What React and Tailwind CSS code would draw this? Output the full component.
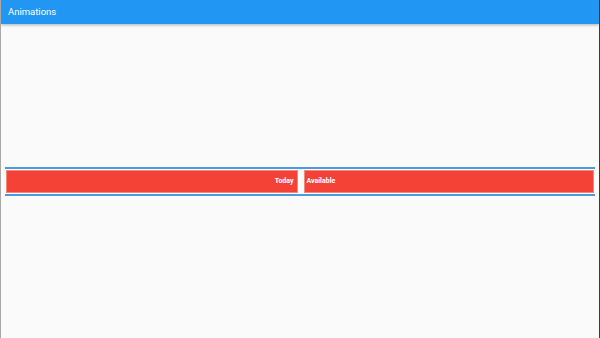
import * as React from "react";

function AppBar() {
	return (
		<header className="h-[24px] bg-[#2196f3] flex items-center px-[7px] shadow-[0_1px_3px_rgba(0,0,0,0.3)] relative z-10">
			<h1 className="text-white text-[9.5px] font-normal leading-none">Animations</h1>
		</header>
	);
}

function StatusBar() {
	return (
		<div className="w-full px-[4px]">
			<div className="h-[2px] bg-[#4a9be0]" />
			<div className="flex gap-[6px] py-[1px] px-[1px]">
				<div className="flex-1 h-[23px] bg-[#f44336] border border-[#f6877c] flex items-center justify-end pr-[3px]">
					<span className="text-white text-[7px] font-bold">Today</span>
				</div>
				<div className="flex-1 h-[23px] bg-[#f44336] border border-[#f6877c] flex items-center justify-start pl-[2px]">
					<span className="text-white text-[7px] font-bold">Available</span>
				</div>
			</div>
			<div className="h-[2px] bg-[#4a9be0]" />
		</div>
	);
}

export default function App() {
	return (
		<div className="w-[600px] h-[338px] bg-[#fafafa] flex flex-col overflow-hidden border-l border-l-[#a8a8a8] border-r border-r-[#3a3a3a]" style={{ fontFamily: "Roboto, 'Liberation Sans', sans-serif" }}>
			<AppBar />
			<main className="flex-1 flex items-center">
				<StatusBar />
			</main>
		</div>
	);
}
